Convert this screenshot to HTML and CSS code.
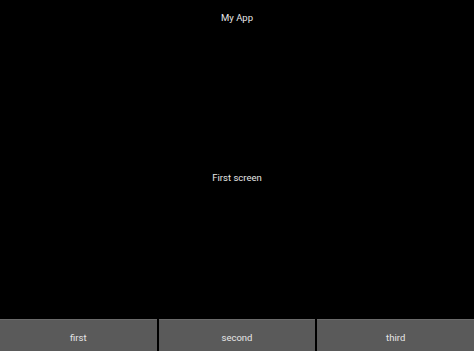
FILE: index.html
```html
<!DOCTYPE html>
<html>
<head>
<meta charset="utf-8">
<link rel="stylesheet" href="styles.css">
</head>
<body>
<div class="app">
  <header class="titlebar">My App</header>
  <main class="content">First screen</main>
  <nav class="tabs">
    <button class="tab">first</button>
    <button class="tab">second</button>
    <button class="tab">third</button>
  </nav>
</div>
</body>
</html>
```
FILE: styles.css
```css
html, body {
  margin: 0;
  padding: 0;
  background: #000;
}
.app {
  width: 474px;
  height: 351px;
  display: flex;
  flex-direction: column;
  background: #000;
  color: #e6e6e6;
  font-family: Roboto, "Noto Sans", sans-serif;
  font-size: 9.5px;
}
.titlebar {
  height: 34px;
  display: flex;
  align-items: center;
  justify-content: center;
}
.content {
  flex: 1;
  display: flex;
  align-items: center;
  justify-content: center;
  padding-top: 2px;
}
.tabs {
  height: 32px;
  display: flex;
  gap: 2px;
}
.tab {
  flex: 1;
  margin: 0;
  padding: 3px 0 0 0;
  border: none;
  border-top: 1px solid #6a6a6a;
  background: #5a5a5a;
  color: #e6e6e6;
  font-family: Roboto, "Noto Sans", sans-serif;
  font-size: 9.5px;
}
```
